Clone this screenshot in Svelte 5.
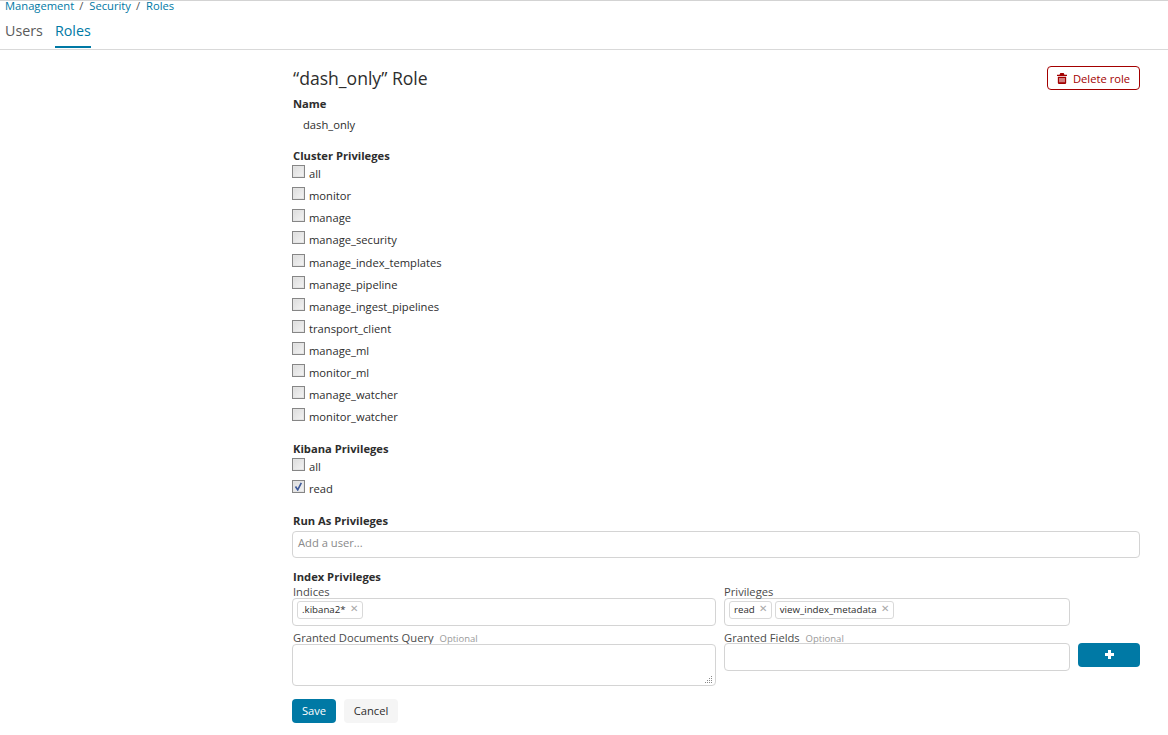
<script>
  const cluster = ['all','monitor','manage','manage_security','manage_index_templates','manage_pipeline','manage_ingest_pipelines','transport_client','manage_ml','monitor_ml','manage_watcher','monitor_watcher'];
  const kibana = [{n:'all',c:false},{n:'read',c:true}];
</script>

<div class="page">
  <header class="top">
    <nav class="crumbs"><a href="#m">Management</a><span>/</span><a href="#s">Security</a><span>/</span><a href="#r">Roles</a></nav>
    <div class="tabs">
      <a class="tab" href="#u">Users</a>
      <a class="tab active" href="#r">Roles</a>
    </div>
  </header>

  <main class="form">
    <div class="titlebar">
      <h1>“dash_only” Role</h1>
      <button class="danger">
        <svg viewBox="0 0 12 13" width="10" height="11" aria-hidden="true"><path fill="#a30000" d="M4 0h4l1 2h3v1.500H0V2h3zM1 4.500h10V12a1 1 0 0 1-1 1H2a1 1 0 0 1-1-1zM3 6v5h1.200V6zm2.400 0v5h1.200V6zm2.400 0v5H9V6z"/></svg>
        Delete role
      </button>
    </div>

    <div class="label name">Name</div>
    <div class="value">dash_only</div>

    <div class="label cluster">Cluster Privileges</div>
    <div class="checks">
      {#each cluster as c}
        <label class="check"><span class="box"></span><span>{c}</span></label>
      {/each}
    </div>

    <div class="label kibana">Kibana Privileges</div>
    <div class="checks">
      {#each kibana as k}
        <label class="check">
          <span class="box">
            {#if k.c}
              <svg viewBox="0 0 11 11" width="11" height="11" aria-hidden="true"><path d="M2.500 5.500 4.700 8.800 8.300 1.800" fill="none" stroke="#3f5a9a" stroke-width="1.600"/></svg>
            {/if}
          </span>
          <span>{k.n}</span>
        </label>
      {/each}
    </div>

    <div class="label runas">Run As Privileges</div>
    <div class="input runinput"><span class="ph">Add a user...</span></div>

    <div class="label index">Index Privileges</div>
    <div class="grid">
      <div class="col first">
        <div class="fl">Indices</div>
        <div class="input tags">
          <span class="tag">.kibana2* <i>✕</i></span>
        </div>
      </div>
      <div class="col">
        <div class="fl">Privileges</div>
        <div class="input tags">
          <span class="tag">read <i>✕</i></span>
          <span class="tag">view_index_metadata <i>✕</i></span>
        </div>
      </div>
      <div></div>
      <div class="col first q">
        <div class="fl">Granted Documents Query <small>Optional</small></div>
        <div class="input area">
          <svg class="grip" viewBox="0 0 9 9" width="9" height="9" aria-hidden="true"><path fill="#8a8a8a" d="M7 1h1v1H7zM5 3h1v1H5zM7 3h1v1H7zM3 5h1v1H3zM5 5h1v1H5zM7 5h1v1H7zM1 7h1v1H1zM3 7h1v1H3zM5 7h1v1H5zM7 7h1v1H7z"/></svg>
        </div>
      </div>
      <div class="col q">
        <div class="fl">Granted Fields <small>Optional</small></div>
        <div class="input fields"></div>
      </div>
      <div class="col q plus-col">
        <div class="fl">&nbsp;</div>
        <button class="primary plus" aria-label="Add">
          <svg viewBox="0 0 9 9" width="9" height="9" aria-hidden="true"><path fill="#fff" d="M3 0h3v3h3v3H6v3H3V6H0V3h3z"/></svg>
        </button>
      </div>
    </div>

    <div class="actions">
      <button class="primary save">Save</button>
      <button class="cancel">Cancel</button>
    </div>
  </main>
</div>

<style>
  :global(body) { margin: 0; background: #fff; }
  .page {
    font-family: "Open Sans", "Noto Sans", sans-serif;
    font-size: 11.2px;
    color: #2d2d2d;
    height: 735px;
    overflow: hidden;
    border-top: 1px solid #d3d3d3;
    box-sizing: border-box;
  }
  .top {
    height: 48px;
    border-bottom: 1px solid #d9d9d9;
    padding-left: 5px;
  }
  .crumbs {
    display: flex;
    gap: 5px;
    height: 11px;
    line-height: 9px;
    font-size: 11.2px;
    color: #0079a5;
  }
  .crumbs a { color: #0079a5; text-decoration: none; }
  .crumbs span { color: #555; margin-right: 1px; }
  .tabs { display: flex; gap: 12px; margin-top: 5px; }
  .tab {
    font-size: 14.300px;
    line-height: 28px;
    height: 30px;
    color: #5a5a5a;
    text-decoration: none;
    box-sizing: content-box;
  }
  .tab.active { color: #0079a5; border-bottom: 2px solid #0079a5; height: 29px; padding: 0; margin-left: 0; }
  .form { margin-left: 292px; width: 848px; }
  .titlebar { display: flex; justify-content: space-between; height: 31px; padding-top: 16px; align-items: flex-start; }
  h1 { margin: -1px 0 0 1px; font-size: 17.600px; font-weight: 400; line-height: 26px; color: #2d2d2d; }
  button { font-family: inherit; font-size: 11.2px; cursor: pointer; }
  .danger {
    width: 93px; height: 24px;
    background: #fff;
    color: #a30000;
    border: 1px solid #a30000;
    border-radius: 4px;
    display: flex; align-items: center; justify-content: center; gap: 6px;
    padding: 0;
  }
  .label { font-weight: 700; font-size: 11.2px; line-height: 14px; color: #2d2d2d; padding-left: 1px; }
  .value { margin: 7px 0 0 11px; line-height: 14px; }
  .cluster { margin-top: 17px; }
  .kibana { margin-top: 13.5px; }
  .runas { margin-top: 13.700px; }
  .index { margin-top: 12px; }
  .checks { display: flex; flex-direction: column; }
  .check { display: flex; align-items: flex-start; height: 22.13px; gap: 4px; line-height: 15px; }
  .check > span:last-child { padding-top: 3px; }
  .box {
    width: 11px; height: 11px;
    border: 1px solid #868686;
    outline: 1px solid #e4e4e4;
    outline-offset: -2px;
    background: linear-gradient(135deg, #dcdcdc, #f4f4f4);
    margin-top: 2px;
    flex: none;
    display: block;
    line-height: 0;
  }
  .input {
    border: 1px solid #d4d4d4;
    border-radius: 4px;
    background: #fff;
    box-sizing: border-box;
  }
  .runinput { height: 27px; margin-top: 3px; padding: 0 5px; line-height: 22px; }
  .ph { color: #8a8a8a; }
  .grid {
    display: grid;
    grid-template-columns: 424px 346px 62px;
    column-gap: 8px;
  }
  .col { min-width: 0; }
  .fl { line-height: 16px; height: 14px; color: #4a4a4a; font-size: 11.2px; }
  .first .fl { padding-left: 1px; }
  small { font-size: 9.500px; color: #9a9a9a; margin-left: 3px; }
  .tags { height: 28px; display: flex; align-items: flex-start; gap: 3px; padding: 2px 4px; }
  .tag {
    height: 18px;
    box-sizing: border-box;
    border: 1px solid #d9d9d9;
    border-radius: 3px;
    padding: 0 4px 0 4px;
    font-size: 9.700px;
    line-height: 15px;
    white-space: nowrap;
    display: flex; gap: 4px;
  }
  .tag i { font-style: normal; color: #a8a8a8; font-size: 9.500px; line-height: 13px; }
  .q { margin-top: 4px; }
  .area { height: 42px; position: relative; margin-top: 0; }
  .grip { position: absolute; right: 2px; bottom: 1px; }
  .fields { height: 28px; margin-top: -1px; }
  .primary { background: #0079a5; color: #fff; border: none; border-radius: 4px; padding: 0; }
  .plus { width: 62px; height: 24px; display: flex; align-items: center; justify-content: center; margin-top: -1px; }
  .actions { display: flex; gap: 8px; margin-top: 13px; }
  .save { width: 44px; height: 24px; padding-bottom: 1px; }
  .cancel { width: 54px; height: 24px; background: #f5f5f5; border: none; border-radius: 4px; color: #2d2d2d; padding: 0 0 1px; }
</style>
